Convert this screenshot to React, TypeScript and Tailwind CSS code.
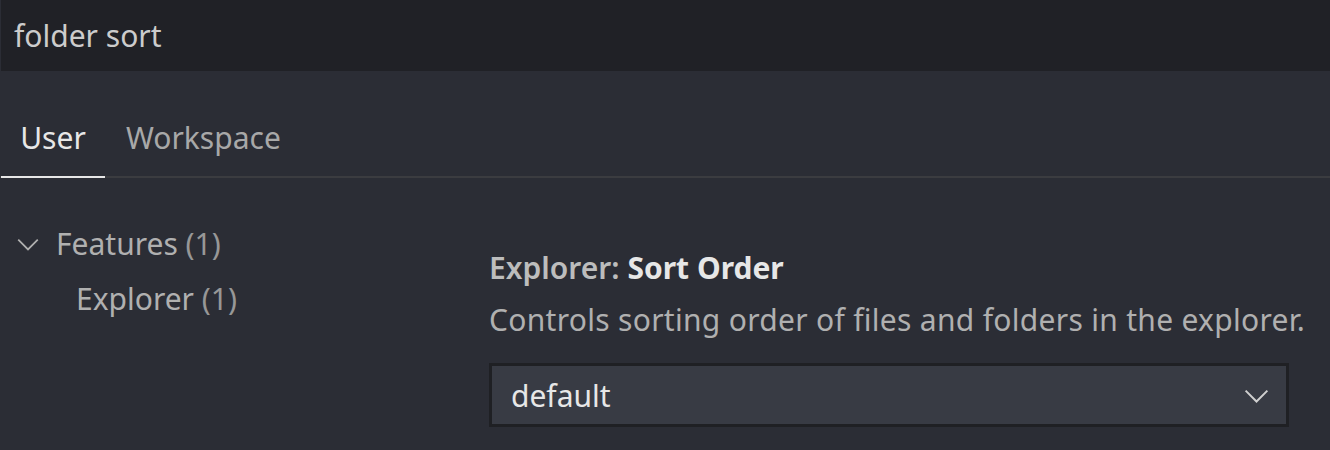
// Settings editor search result view (dark theme)

function Chevron({ className }: { className?: string }) {
  return (
    <svg viewBox="0 0 24 24" className={className} fill="none" stroke="currentColor" strokeWidth={1.6}>
      <path d="M3 8l9 9 9-9" />
    </svg>
  );
}

export default function App() {
  return (
    <div
      className="w-[1330px] h-[450px] bg-[#2b2d35] overflow-hidden"
      style={{ fontFamily: '"Noto Sans", "Open Sans", sans-serif' }}
    >
      {/* search box */}
      <div className="ml-[1px] h-[71px] bg-[#202126] flex items-center pl-[13px] text-[30px] leading-[40px] text-[#cccccc]">
        folder sort
      </div>

      {/* tabs */}
      <div className="flex h-[107px] border-b-2 border-[#3b3c40] text-[30px] leading-[40px]">
        <div className="ml-[1px] w-[104px] flex justify-center pt-[47px] text-[#e7e7e7] border-b-2 border-[#e7e7e7] -mb-[2px]">
          User
        </div>
        <div className="pl-[21px] pt-[47px] text-[#a8a8a8]">Workspace</div>
      </div>

      <div className="flex">
        {/* tree */}
        <div className="w-[489px] pt-[46px] text-[30px] leading-[40px] text-[#b0b0b0]">
          <div className="flex items-center">
            <Chevron className="w-[26px] h-[26px] ml-[15px] mr-[15px] text-[#b0b0b0]" />
            <span>
              Features <span className="text-[#979797]">(1)</span>
            </span>
          </div>
          <div className="mt-[15px] pl-[76px]">
            Explorer <span className="text-[#979797]">(1)</span>
          </div>
        </div>

        {/* setting */}
        <div className="pt-[70px] w-[830px]">
          <div className="text-[30px] leading-[40px] font-semibold text-[#bdbdbd]">
            Explorer: <span className="font-bold text-[#e7e7e7]">Sort Order</span>
          </div>
          <div className="mt-[12px] text-[30px] leading-[40px] tracking-[0.3px] text-[#b0b0b0]">
            Controls sorting order of files and folders in the explorer.
          </div>
          <div className="mt-[23px] w-[800px] h-[64px] border-[3px] border-[#1f2024] bg-[#383b44] flex items-center justify-between pl-[19px] pr-[15px] text-[30px] text-[#e7e7e7]">
            <span>default</span>
            <Chevron className="w-[29px] h-[29px] text-[#d0d0d0]" />
          </div>
        </div>
      </div>
    </div>
  );
}
